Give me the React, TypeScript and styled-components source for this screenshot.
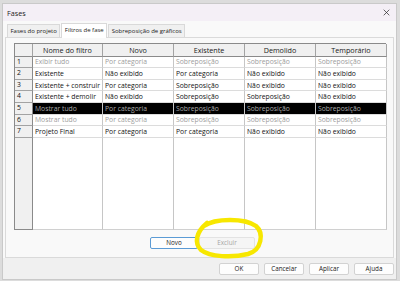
import React from "react";
import styled, { createGlobalStyle, css } from "styled-components";

const Global = createGlobalStyle`
  html, body { margin: 0; padding: 0; }
  body {
    background: #dcdcdc;
    font-family: "Open Sans", "Noto Sans", sans-serif;
    color: #1a1a1a;
    width: 400px;
    height: 281px;
    overflow: hidden;
  }
`;

const Page = styled.div`
  position: relative;
  width: 400px;
  height: 281px;
  padding: 3px 0 0 2px;
  box-sizing: border-box;
`;

const Dialog = styled.div`
  width: 395px;
  height: 277px;
  box-sizing: border-box;
  border: 1px solid #c9c9c9;
  background: #f9f9f9;
  display: flex;
  flex-direction: column;
`;

const TitleBar = styled.div`
  height: 17px;
  background: #f4eff6;
  display: flex;
  align-items: center;
  justify-content: space-between;
  padding: 0 6px 0 4px;
`;

const Title = styled.span`
  font-size: 7.2px;
  color: #1a1a1a;
`;

const CloseIcon = styled.svg`
  width: 7px;
  height: 7px;
`;

const TabBar = styled.div`
  display: flex;
  align-items: flex-end;
  height: 16px;
  padding: 0 0 0 4px;
`;

const Tab = styled.div<{ $active?: boolean }>`
  font-size: 6px;
  height: 12px;
  line-height: 12px;
  padding: 0 2.5px;
  border: 1px solid #d9d9d9;
  border-bottom: none;
  margin-right: 1px;
  background: #f0f0f0;
  color: #1a1a1a;
  white-space: nowrap;
  ${(p) =>
    p.$active &&
    css`
      height: 14px;
      line-height: 13px;
      background: #ffffff;
      margin-bottom: -1px;
      position: relative;
    `}
`;

const Panel = styled.div`
  margin: 0 2px 0 2px;
  border: 1px solid #dadada;
  background: #f9f9f9;
  padding: 5px 8px 8px 8px;
  display: flex;
  flex-direction: column;
  height: 221px;
  box-sizing: border-box;
`;

const Grid = styled.div`
  display: grid;
  grid-template-columns: 18px 70px 71px 71px 71px 71px;
  grid-template-rows: 12.7px repeat(7, 11.6px) 1fr;
  height: 187px;
  width: 372px;
  box-sizing: border-box;
  border-left: 1px solid #8a8a8a;
  border-top: 1px solid #8a8a8a;
  background: #ffffff;
`;

const HeadCell = styled.div`
  background: #f0f0f0;
  border-right: 1px solid #a3a3a3;
  border-bottom: 1px solid #8a8a8a;
  font-size: 7.2px;
  display: flex;
  align-items: center;
  justify-content: center;
  white-space: nowrap;
  overflow: hidden;
`;

const RowHead = styled.div<{ $last?: boolean }>`
  background: #f0f0f0;
  border-right: 1px solid #8a8a8a;
  border-bottom: 1px solid ${(p) => (p.$last ? "#8a8a8a" : "#a3a3a3")};
  font-size: 6.8px;
  line-height: 1;
  display: flex;
  align-items: center;
  padding-left: 2px;
  color: #111;
`;

const Cell = styled.div<{ $tone: "normal" | "dim" | "selected"; $filler?: boolean }>`
  border-right: 1px solid #c6c6c6;
  border-bottom: 1px solid ${(p) => (p.$filler ? "#d0d0d0" : "#dcdcdc")};
  font-size: 6.8px;
  display: flex;
  align-items: center;
  padding-left: 2px;
  white-space: nowrap;
  overflow: hidden;
  background: ${(p) => (p.$tone === "selected" ? "#000000" : "#ffffff")};
  color: ${(p) =>
    p.$tone === "selected" ? "#a9a9a9" : p.$tone === "dim" ? "#9d9d9d" : "#141414"};
`;

const PanelButtons = styled.div`
  display: flex;
  gap: 1px;
  margin-top: 7px;
  padding-left: 136px;
`;

const Button = styled.button<{ $primary?: boolean; $w: number }>`
  width: ${(p) => p.$w}px;
  height: 12px;
  padding: 0;
  font-family: "Open Sans", "Noto Sans", sans-serif;
  font-size: 6.3px;
  line-height: 10px;
  border-radius: 2px;
  background: #fdfdfd;
  border: 1px solid ${(p) => (p.$primary ? "#5b9bd5" : "#d2d2d2")};
  color: #1a1a1a;
  box-sizing: border-box;
  &:disabled {
    background: #f5f5f5;
    border-color: #e3e3e3;
    color: #a6a6a6;
  }
`;

const Footer = styled.div`
  flex: 1;
  background: #f0f0f0;
  display: flex;
  justify-content: flex-end;
  align-items: flex-start;
  gap: 5px;
  padding: 5px 2px 0 0;
`;

const Annotation = styled.svg`
  position: absolute;
  left: 0;
  top: 0;
  width: 400px;
  height: 281px;
  pointer-events: none;
`;

type Tone = "normal" | "dim" | "selected";
const rows: { cells: string[]; tone: Tone }[] = [
  { cells: ["Exibir tudo", "Por categoria", "Sobreposição", "Sobreposição", "Sobreposição"], tone: "dim" },
  { cells: ["Existente", "Não exibido", "Por categoria", "Não exibido", "Não exibido"], tone: "normal" },
  { cells: ["Existente + construir", "Por categoria", "Sobreposição", "Não exibido", "Não exibido"], tone: "normal" },
  { cells: ["Existente + demolir", "Não exibido", "Sobreposição", "Sobreposição", "Não exibido"], tone: "normal" },
  { cells: ["Mostrar tudo", "Por categoria", "Sobreposição", "Sobreposição", "Sobreposição"], tone: "selected" },
  { cells: ["Mostrar tudo", "Por categoria", "Sobreposição", "Sobreposição", "Sobreposição"], tone: "dim" },
  { cells: ["Projeto Final", "Por categoria", "Por categoria", "Não exibido", "Não exibido"], tone: "normal" },
];

const headers = ["Nome do filtro", "Novo", "Existente", "Demolido", "Temporário"];

export default function App() {
  return (
    <>
      <Global />
      <Page>
        <Dialog>
          <TitleBar>
            <Title>Fases</Title>
            <CloseIcon viewBox="0 0 10 10">
              <path d="M1 1 L9 9 M9 1 L1 9" stroke="#222" strokeWidth="1" fill="none" />
            </CloseIcon>
          </TitleBar>
          <TabBar>
            <Tab>Fases do projeto</Tab>
            <Tab $active>Filtros de fase</Tab>
            <Tab>Sobreposição de gráficos</Tab>
          </TabBar>
          <Panel>
            <Grid>
              <HeadCell />
              {headers.map((h) => (
                <HeadCell key={h}>{h}</HeadCell>
              ))}
              {rows.map((r, i) => (
                <React.Fragment key={i}>
                  <RowHead>{i + 1}</RowHead>
                  {r.cells.map((c, j) => (
                    <Cell key={j} $tone={r.tone}>
                      {c}
                    </Cell>
                  ))}
                </React.Fragment>
              ))}
              <RowHead $last />
              {headers.map((h) => (
                <Cell key={"f" + h} $tone="normal" $filler />
              ))}
            </Grid>
            <PanelButtons>
              <Button $primary $w={48}>Novo</Button>
              <Button $w={56} disabled>Excluir</Button>
            </PanelButtons>
          </Panel>
          <Footer>
            <Button $w={40}>OK</Button>
            <Button $w={40}>Cancelar</Button>
            <Button $w={40}>Aplicar</Button>
            <Button $w={40}>Ajuda</Button>
          </Footer>
        </Dialog>
        <Annotation viewBox="0 0 400 281">
          <path
            d="M204 226 C215 218, 245 218, 256 226 C264 233, 262 250, 248 254 C232 258, 210 257, 201 250 C194 243, 196 232, 207 223"
            stroke="#f7e700"
            strokeWidth="4.5"
            fill="none"
            strokeLinecap="round"
          />
        </Annotation>
      </Page>
    </>
  );
}
